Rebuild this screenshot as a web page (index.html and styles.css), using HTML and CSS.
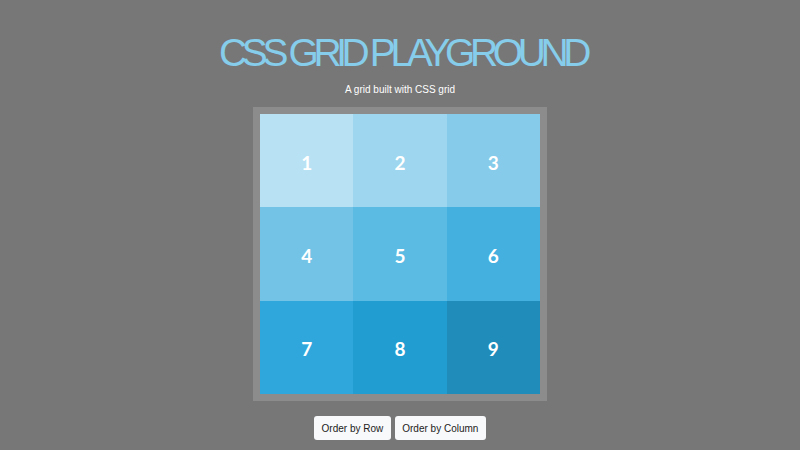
FILE: index.html
```html
<!DOCTYPE html>
<html>
<head>
<meta charset="utf-8">
<link rel="stylesheet" href="styles.css">
</head>
<body>
<div class="page">
  <h1 class="title">CSS GRID PLAYGROUND</h1>
  <p class="subtitle">A grid built with CSS grid</p>
  <div class="frame">
    <div class="grid">
      <div class="cell c1">1</div>
      <div class="cell c2">2</div>
      <div class="cell c3">3</div>
      <div class="cell c4">4</div>
      <div class="cell c5">5</div>
      <div class="cell c6">6</div>
      <div class="cell c7">7</div>
      <div class="cell c8">8</div>
      <div class="cell c9">9</div>
    </div>
  </div>
  <div class="buttons">
    <button class="btn">Order by Row</button>
    <button class="btn">Order by Column</button>
  </div>
</div>
</body>
</html>
```
FILE: styles.css
```css
html, body {
  margin: 0;
  padding: 0;
  background: #777777;
  font-family: "Liberation Sans", Arial, sans-serif;
}
.page {
  width: 800px;
  height: 450px;
  display: flex;
  flex-direction: column;
  align-items: center;
  overflow: hidden;
}
.title {
  margin: 32px 0 0 0;
  padding-left: 5px;
  font-size: 39px;
  font-weight: normal;
  letter-spacing: -5.4px;
  line-height: 42px;
  color: #86cdeb;
}
.subtitle {
  margin: 10px 0 0 0;
  font-size: 10px;
  line-height: 12px;
  color: #ffffff;
}
.frame {
  margin-top: 11px;
  padding: 7px;
  background: #8c8c8c;
}
.grid {
  width: 280px;
  height: 280px;
  display: grid;
  grid-template-columns: repeat(3, 1fr);
  grid-template-rows: repeat(3, 1fr);
}
.cell {
  display: flex;
  align-items: center;
  justify-content: center;
  padding-top: 3px;
  color: #ffffff;
  font-family: Lato, "Open Sans", sans-serif;
  font-weight: 700;
  font-size: 19px;
}
.c1 { background: #b8e2f4; }
.c2 { background: #9dd6ee; }
.c3 { background: #86cbe9; }
.c4 { background: #72c3e6; }
.c5 { background: #5bbbe3; }
.c6 { background: #43b0df; }
.c7 { background: #2fa7dc; }
.c8 { background: #229dd2; }
.c9 { background: #1f8cba; }
.buttons {
  margin-top: 15px;
  display: flex;
  gap: 4px;
}
.btn {
  height: 24px;
  padding: 0 7.5px;
  border: none;
  border-radius: 3px;
  background: #f8f9fa;
  color: #222222;
  font-family: "Liberation Sans", Arial, sans-serif;
  font-size: 10px;
}
```
